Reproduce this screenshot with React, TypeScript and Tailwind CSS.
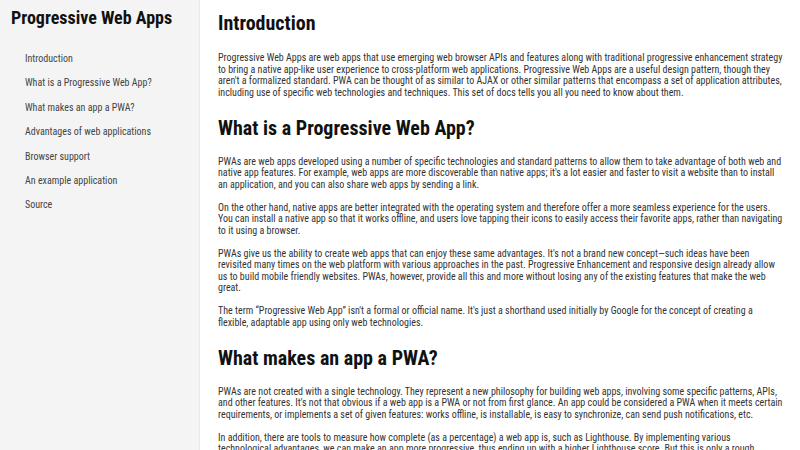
const links = [
  "Introduction",
  "What is a Progressive Web App?",
  "What makes an app a PWA?",
  "Advantages of web applications",
  "Browser support",
  "An example application",
  "Source",
];

type Section = { title: string; paragraphs: string[][] };

const sections: Section[] = [
  {
    title: "Introduction",
    paragraphs: [
      [
        "Progressive Web Apps are web apps that use emerging web browser APIs and features along with traditional progressive enhancement strategy",
        "to bring a native app-like user experience to cross-platform web applications. Progressive Web Apps are a useful design pattern, though they",
        "aren't a formalized standard. PWA can be thought of as similar to AJAX or other similar patterns that encompass a set of application attributes,",
        "including use of specific web technologies and techniques. This set of docs tells you all you need to know about them.",
      ],
    ],
  },
  {
    title: "What is a Progressive Web App?",
    paragraphs: [
      [
        "PWAs are web apps developed using a number of specific technologies and standard patterns to allow them to take advantage of both web and",
        "native app features. For example, web apps are more discoverable than native apps; it's a lot easier and faster to visit a website than to install",
        "an application, and you can also share web apps by sending a link.",
      ],
      [
        "On the other hand, native apps are better integrated with the operating system and therefore offer a more seamless experience for the users.",
        "You can install a native app so that it works offline, and users love tapping their icons to easily access their favorite apps, rather than navigating",
        "to it using a browser.",
      ],
      [
        "PWAs give us the ability to create web apps that can enjoy these same advantages. It's not a brand new concept—such ideas have been",
        "revisited many times on the web platform with various approaches in the past. Progressive Enhancement and responsive design already allow",
        "us to build mobile friendly websites. PWAs, however, provide all this and more without losing any of the existing features that make the web",
        "great.",
      ],
      [
        "The term \u201cProgressive Web App\u201d isn't a formal or official name. It's just a shorthand used initially by Google for the concept of creating a",
        "flexible, adaptable app using only web technologies.",
      ],
    ],
  },
  {
    title: "What makes an app a PWA?",
    paragraphs: [
      [
        "PWAs are not created with a single technology. They represent a new philosophy for building web apps, involving some specific patterns, APIs,",
        "and other features. It's not that obvious if a web app is a PWA or not from first glance. An app could be considered a PWA when it meets certain",
        "requirements, or implements a set of given features: works offline, is installable, is easy to synchronize, can send push notifications, etc.",
      ],
      [
        "In addition, there are tools to measure how complete (as a percentage) a web app is, such as Lighthouse. By implementing various",
        "technological advantages, we can make an app more progressive, thus ending up with a higher Lighthouse score. But this is only a rough",
        "indicator.",
      ],
    ],
  },
];

export default function App() {
  return (
    <div
      className="flex h-[450px] w-[800px] overflow-hidden bg-white text-[#333] font-stretch-condensed"
      style={{ fontFamily: "Roboto, 'Liberation Sans', sans-serif" }}
    >
      {/* Sidebar */}
      <aside className="w-[200px] shrink-0 border-r border-[#e8e8e8] bg-[#f4f4f4]">
        <h1 className="px-[11px] pt-[6px] text-[18px] font-bold leading-[24px] text-[#111]">
          Progressive Web Apps
        </h1>
        <nav className="mt-[22px] flex flex-col gap-[10.4px] pl-[25px]">
          {links.map((l) => (
            <a key={l} className="text-[10px] leading-[14px] text-[#444]">
              {l}
            </a>
          ))}
        </nav>
      </aside>

      {/* Content */}
      <main className="flex-1 overflow-hidden pl-[18px] pr-[6px] pt-[11px] text-[10px] leading-[11.5px] text-[#333]">
        {sections.map((s, i) => (
          <section key={s.title} className={i === 0 ? "" : "mt-[18px]"}>
            <h2 className="text-[20px] font-bold leading-[24px] text-[#111]">{s.title}</h2>
            <div className={`flex flex-col gap-[11.5px] ${i === 0 ? "mt-[17px]" : "mt-[15.5px]"}`}>
              {s.paragraphs.map((p, j) => (
                <p key={j} className="whitespace-nowrap">
                  {p.map((line, k) => (
                    <span key={k}>
                      {line}
                      {k < p.length - 1 && <br />}
                    </span>
                  ))}
                </p>
              ))}
            </div>
          </section>
        ))}
      </main>
    </div>
  );
}
